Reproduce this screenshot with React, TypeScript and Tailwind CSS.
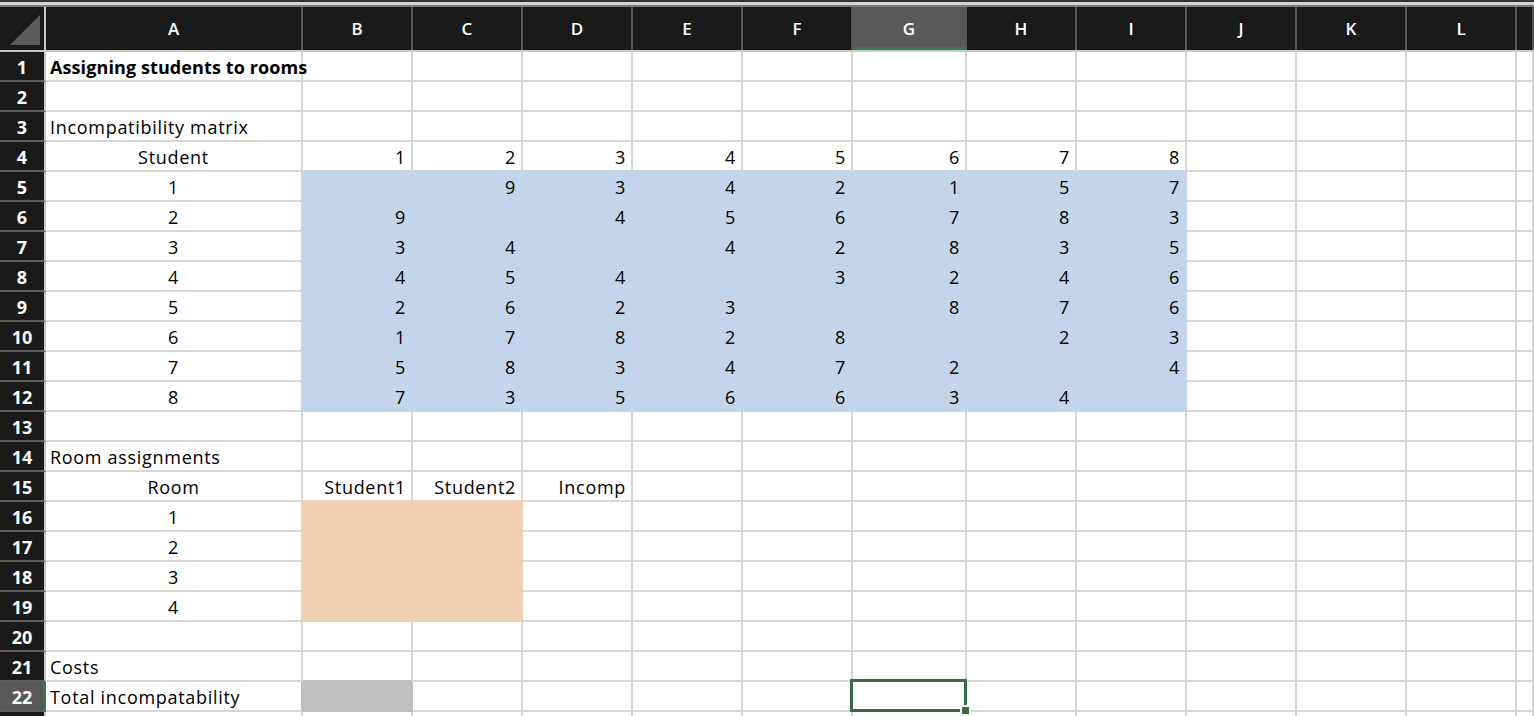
import React from 'react';

type Fill = 'blue' | 'orange' | 'gray' | null;
type Cell = { text?: string; align?: 'left' | 'center' | 'right'; bold?: boolean };

const colLetters = ['A', 'B', 'C', 'D', 'E', 'F', 'G', 'H', 'I', 'J', 'K', 'L', ''];
const colWidth = [
  'w-[257px]', 'w-[110px]', 'w-[110px]', 'w-[110px]', 'w-[110px]', 'w-[110px]',
  'w-[114px]', 'w-[110px]', 'w-[110px]', 'w-[110px]', 'w-[110px]', 'w-[110px]', 'flex-1',
];

const matrix = [
  ['', '9', '3', '4', '2', '1', '5', '7'],
  ['9', '', '4', '5', '6', '7', '8', '3'],
  ['3', '4', '', '4', '2', '8', '3', '5'],
  ['4', '5', '4', '', '3', '2', '4', '6'],
  ['2', '6', '2', '3', '', '8', '7', '6'],
  ['1', '7', '8', '2', '8', '', '2', '3'],
  ['5', '8', '3', '4', '7', '2', '', '4'],
  ['7', '3', '5', '6', '6', '3', '4', ''],
];

function buildRow(r: number): Cell[] {
  const cells: Cell[] = Array.from({ length: 13 }, () => ({}));
  const L = (t: string, bold = false): Cell => ({ text: t, align: 'left', bold });
  const C = (t: string): Cell => ({ text: t, align: 'center' });
  const R = (t: string): Cell => ({ text: t, align: 'right' });
  if (r === 1) cells[0] = L('Assigning students to rooms', true);
  if (r === 3) cells[0] = L('Incompatibility matrix');
  if (r === 4) {
    cells[0] = C('Student');
    for (let i = 1; i <= 8; i++) cells[i] = R(String(i));
  }
  if (r >= 5 && r <= 12) {
    cells[0] = C(String(r - 4));
    matrix[r - 5].forEach((v, i) => (cells[i + 1] = R(v)));
  }
  if (r === 14) cells[0] = L('Room assignments');
  if (r === 15) {
    cells[0] = C('Room');
    cells[1] = R('Student1');
    cells[2] = R('Student2');
    cells[3] = R('Incomp');
  }
  if (r >= 16 && r <= 19) cells[0] = C(String(r - 15));
  if (r === 21) cells[0] = L('Costs');
  if (r === 22) cells[0] = L('Total incompatability');
  return cells;
}

function fillAt(r: number, c: number): Fill {
  if (r >= 5 && r <= 12 && c >= 1 && c <= 8) return 'blue';
  if (r >= 16 && r <= 19 && c >= 1 && c <= 2) return 'orange';
  if (r === 22 && c === 1) return 'gray';
  return null;
}

const bgClass: Record<string, string> = {
  blue: 'bg-[#c2d5eb]',
  orange: 'bg-[#f1cfb2]',
  gray: 'bg-[#bfbfbf]',
  none: 'bg-white',
};
const rightBorder: Record<string, string> = {
  blue: 'border-r-[#c2d5eb]',
  orange: 'border-r-[#f1cfb2]',
  gray: 'border-r-[#bfbfbf]',
  none: 'border-r-[#d6d6d6]',
};
const bottomBorder: Record<string, string> = {
  blue: 'border-b-[#c2d5eb]',
  orange: 'border-b-[#f1cfb2]',
  gray: 'border-b-[#bfbfbf]',
  none: 'border-b-[#d6d6d6]',
};

function GridCell({ r, c, cell }: { r: number; c: number; cell: Cell }) {
  const own = fillAt(r, c);
  const right = own ?? fillAt(r, c + 1) ?? 'none';
  const below = own ?? fillAt(r + 1, c) ?? 'none';
  const align =
    cell.align === 'right' ? 'justify-end pr-[5px]' : cell.align === 'center' ? 'justify-center' : 'justify-start pl-[4px]';
  return (
    <div
      className={`${colWidth[c]} relative h-full shrink-0 flex items-center pt-[2px] border-r-2 border-b-2 whitespace-nowrap overflow-visible ${bgClass[own ?? 'none']} ${rightBorder[right]} ${bottomBorder[below]} ${align} ${cell.bold ? 'font-bold tracking-[0.1px]' : 'tracking-[0.7px]'}`}
    >
      {cell.text && <span className="relative z-10">{cell.text}</span>}
      {r === 22 && c === 6 && (
        <div className="absolute left-[-3px] top-[-3px] w-[117px] h-[33px] border-[3px] border-[#386c45] z-20">
          <div className="absolute right-[-7px] bottom-[-7px] w-[11px] h-[11px] bg-[#386c45] border-2 border-white" />
        </div>
      )}
    </div>
  );
}

export default function App() {
  const rows = Array.from({ length: 23 }, (_, i) => i + 1);
  return (
    <div className="w-[1534px] h-[716px] overflow-hidden bg-white text-black font-['Open_Sans','Noto_Sans',sans-serif] text-[18px]">
      {/* window chrome strip */}
      <div className="h-[2px] bg-[#333333]" />
      <div className="h-[3px] bg-[#d4d4d4]" />
      <div className="h-[2px] bg-[#7a7a7a]" />

      {/* column headers */}
      <div className="flex h-[45px] bg-[#1a1a1a] border-b-2 border-[#c8c8c8]">
        <div className="w-[46px] shrink-0 border-r-2 border-[#c8c8c8] relative">
          <svg className="absolute left-[10px] top-[8px]" width="30" height="30" viewBox="0 0 30 30">
            <polygon points="0,30 30,30 30,0" fill="#5c5c5c" />
          </svg>
        </div>
        {colLetters.map((l, i) => (
          <div
            key={i}
            className={`${colWidth[i]} shrink-0 flex items-center justify-center text-white font-semibold text-[17px] border-r-2 border-[#555555] ${
              l === 'G' ? 'bg-[#595959] border-b-[3px] border-b-[#3b7a4c] pt-[3px]' : ''
            }`}
          >
            {l}
          </div>
        ))}
      </div>

      {rows.map((r) => {
        const cells = buildRow(r);
        return (
          <div key={r} className="flex h-[30px]">
            <div
              className={`w-[46px] shrink-0 flex items-center justify-center pt-[2px] text-white font-bold text-[18px] border-b-2 border-b-[#5e5e5e] border-r-2 ${
                r === 22 ? 'bg-[#595959] border-r-[#3b7a4c]' : 'bg-[#1a1a1a] border-r-[#c8c8c8]'
              }`}
            >
              {r <= 22 ? r : ''}
            </div>
            {cells.map((cell, c) => (
              <GridCell key={c} r={r} c={c} cell={cell} />
            ))}
          </div>
        );
      })}
    </div>
  );
}
